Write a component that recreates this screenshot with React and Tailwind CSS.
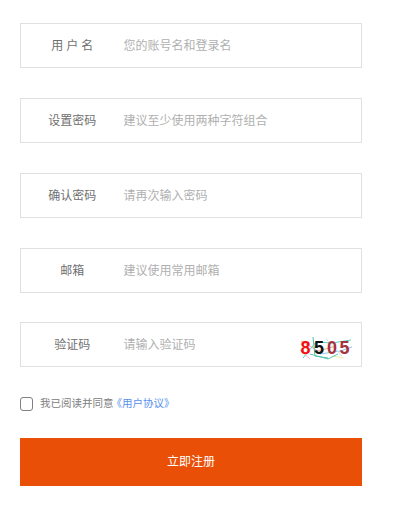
const FONT = "font-['Roboto','Noto_Sans_CJK_SC',sans-serif]";

const fields = [
  { label: '用 户 名', hint: '您的账号名和登录名' },
  { label: '设置密码', hint: '建议至少使用两种字符组合' },
  { label: '确认密码', hint: '请再次输入密码' },
  { label: '邮箱', hint: '建议使用常用邮箱' },
  { label: '验证码', hint: '请输入验证码', captcha: true },
];

function Captcha() {
  return (
    <div className="absolute left-[277px] top-[12px] h-[28px] w-[56px]">
      <svg className="absolute inset-0" width="56" height="28" viewBox="0 0 56 28" fill="none" strokeWidth="1">
        <path d="M3 6 L20 16 L38 11" stroke="#f2a58e" />
        <path d="M15 2 L17 21 L30 23" stroke="#3fc4a8" />
        <path d="M5 23 L18 7 L34 8 L53 5" stroke="#58d0c8" />
        <path d="M22 19 L42 16 L54 12" stroke="#8ec8ee" />
        <path d="M2 15 L12 24" stroke="#f5b0c0" />
        <path d="M34 21 L46 23" stroke="#e8f0a0" />
        <path d="M12 19 L30 24 L40 19" stroke="#5cc8b0" />
        <path d="M28 4 L44 21" stroke="#bfe3f5" />
      </svg>
      <div className="absolute left-[1px] top-[3px] flex font-['Liberation_Sans',sans-serif] text-[18px] font-bold leading-[20px]">
        <span className="w-[13px] text-center text-[#f01010]">8</span>
        <span className="w-[14px] text-center text-[#111111]">5</span>
        <span className="w-[12px] text-center text-[#a8323c]">0</span>
        <span className="w-[13px] text-center text-[#a8323c]">5</span>
      </div>
    </div>
  );
}

function Field({ label, hint, captcha }) {
  return (
    <div className="relative flex h-[45px] w-[342px] items-center border border-[#e0e0e0] bg-white pt-[1px]">
      <div className="w-[102.5px] whitespace-pre text-center text-[12px] text-[#707070]">{label}</div>
      <div className="text-[12px] text-[#b0b0b0]">{hint}</div>
      {captcha && <Captcha />}
    </div>
  );
}

export default function App() {
  return (
    <div className={`${FONT} h-[523px] w-[400px] overflow-hidden bg-white pl-[20px] pt-[23px]`}>
      <div className="flex flex-col gap-[29.85px]">
        {fields.map((f) => (
          <Field key={f.label} {...f} />
        ))}
      </div>
      <div className="mt-[28.6px] flex h-[16px] items-center">
        <span className="h-[14px] w-[13px] rounded-[3px] border border-[#808080] bg-white" />
        <span className="ml-[7px] text-[10.5px] text-[#808080]">我已阅读并同意</span>
        <span className="ml-[-2px] text-[10.5px] text-[#5a90f0]">《用户协议》</span>
      </div>
      <button className="mt-[26px] flex h-[48px] w-[342px] items-center justify-center bg-[#ea4f08] pt-[1px] text-[12px] text-white">
        立即注册
      </button>
    </div>
  );
}
